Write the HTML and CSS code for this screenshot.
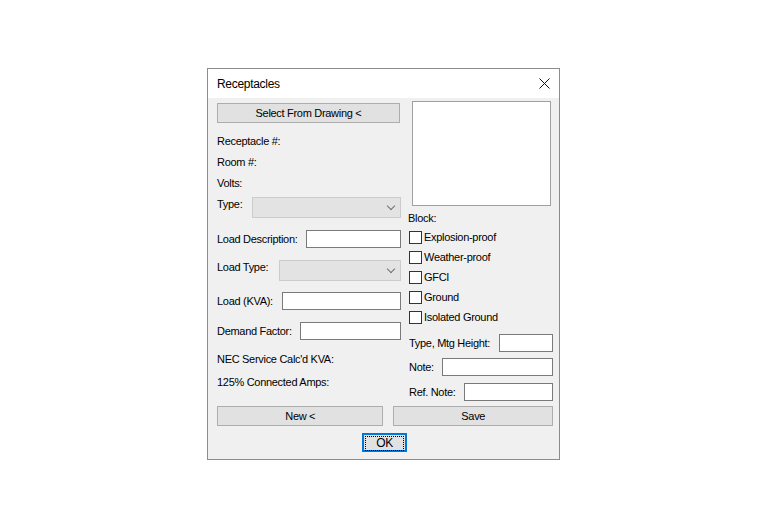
FILE: index.html
```html
<!DOCTYPE html>
<html lang="en">

<head>
    <meta charset="UTF-8">
    <title>Receptacles</title>
    <link rel="stylesheet" href="styles.css">
</head>

<body>
    <div class="dialog">
        <div class="titlebar">
            <span class="title">Receptacles</span>
            <svg class="close" width="11" height="11" viewBox="0 0 11 11">
                <path d="M0.5 0.5L10.5 10.5M10.5 0.5L0.5 10.5" />
            </svg>
        </div>
        <div class="content">
            <div class="columns">
                <div class="col-left">
                    <button class="btn btn-select">Select From Drawing &lt;</button>
                    <div class="info r-receptacle">Receptacle #:</div>
                    <div class="info r-room">Room #:</div>
                    <div class="info r-volts">Volts:</div>
                    <div class="field combo-row r-type">
                        <span class="label">Type:</span>
                        <div class="combo w-type"><span class="chev"></span></div>
                    </div>
                    <div class="field r-desc">
                        <span class="label">Load Description:</span>
                        <div class="textbox w-desc"></div>
                    </div>
                    <div class="field combo-row r-loadtype">
                        <span class="label">Load Type:</span>
                        <div class="combo w-loadtype"><span class="chev"></span></div>
                    </div>
                    <div class="field r-kva">
                        <span class="label">Load (KVA):</span>
                        <div class="textbox w-kva"></div>
                    </div>
                    <div class="field r-demand">
                        <span class="label">Demand Factor:</span>
                        <div class="textbox w-demand"></div>
                    </div>
                    <div class="info r-nec">NEC Service Calc'd KVA:</div>
                    <div class="info r-amps">125% Connected Amps:</div>
                </div>
                <div class="col-right">
                    <div class="preview"></div>
                    <div class="info r-block">Block:</div>
                    <div class="checks">
                        <label class="check"><span class="box"></span>Explosion-proof</label>
                        <label class="check"><span class="box"></span>Weather-proof</label>
                        <label class="check"><span class="box"></span>GFCI</label>
                        <label class="check"><span class="box"></span>Ground</label>
                        <label class="check"><span class="box"></span>Isolated Ground</label>
                    </div>
                    <div class="field r-mtg">
                        <span class="label">Type, Mtg Height:</span>
                        <div class="textbox w-mtg"></div>
                    </div>
                    <div class="field r-note">
                        <span class="label">Note:</span>
                        <div class="textbox w-note"></div>
                    </div>
                    <div class="field r-refnote">
                        <span class="label">Ref. Note:</span>
                        <div class="textbox w-refnote"></div>
                    </div>
                </div>
            </div>
            <div class="actions">
                <button class="btn btn-new">New &lt;</button>
                <button class="btn btn-save">Save</button>
            </div>
            <div class="ok-row">
                <button class="btn btn-ok"><span class="focus">OK</span></button>
            </div>
        </div>
    </div>
</body>

</html>
```

FILE: styles.css
```css
body {
    font-family: "Liberation Sans", Arial, sans-serif;
    font-size: 11px;
    letter-spacing: -0.3px;
    color: #000;
    margin: 0;
    padding: 0;
    background-color: #fff;
    display: flex;
    justify-content: center;
    align-items: center;
    min-height: 100vh;
}

.dialog {
    width: 351px;
    height: 390px;
    margin-right: 1px;
    border: 1px solid #8c8c8c;
    background-color: #f0f0f0;
    display: flex;
    flex-direction: column;
}

.titlebar {
    height: 29px;
    background-color: #fff;
    display: flex;
    align-items: center;
    justify-content: space-between;
    padding: 0 9px 0 9px;
}

.title {
    font-size: 12px;
}

.close path {
    stroke: #111;
    stroke-width: 1;
    fill: none;
}

.content {
    padding: 0 6px 0 9px;
}

.columns {
    height: 308px;
    display: flex;
    justify-content: space-between;
}

.col-left {
    width: 184px;
    display: flex;
    flex-direction: column;
}

.col-right {
    width: 145px;
    display: flex;
    flex-direction: column;
}

.btn {
    font-family: inherit;
    font-size: 11px;
    letter-spacing: -0.3px;
    color: #000;
    background-color: #e1e1e1;
    border: 1px solid #adadad;
    padding: 0;
    height: 20px;
}

.btn-select {
    margin-top: 5px;
    width: 183px;
}

.info {
    line-height: 16px;
}

.r-receptacle {
    margin-top: 10px;
}

.r-room,
.r-volts {
    margin-top: 5px;
}

.field {
    display: flex;
    justify-content: space-between;
    align-items: center;
}

.combo-row {
    align-items: flex-start;
}

.combo-row .label {
    line-height: 16px;
    margin-top: -1px;
}

.textbox {
    height: 16px;
    background-color: #fff;
    border: 1px solid #7a7a7a;
}

.combo {
    height: 19px;
    background-color: #e3e3e3;
    border: 1px solid #cccccc;
    position: relative;
}

.chev {
    position: absolute;
    right: 6px;
    top: 5px;
    width: 5px;
    height: 5px;
    border-right: 1px solid #707070;
    border-bottom: 1px solid #707070;
    transform: rotate(45deg);
}

.r-type {
    margin-top: 6px;
}

.w-type {
    width: 147px;
}

.r-desc {
    margin-top: 12px;
}

.w-desc {
    width: 93px;
}

.r-loadtype {
    margin-top: 12px;
}

.w-loadtype {
    width: 120px;
}

.r-kva {
    margin-top: 11px;
}

.w-kva {
    width: 117px;
}

.r-demand {
    margin-top: 12px;
}

.w-demand {
    width: 99px;
}

.r-nec {
    margin-top: 11px;
}

.r-amps {
    margin-top: 7px;
}

.preview {
    margin: 3px 0 0 4px;
    width: 137px;
    height: 103px;
    background-color: #fff;
    border: 1px solid #a0a0a0;
}

.r-block {
    margin-top: 4px;
}

.checks {
    margin-top: 1px;
    display: flex;
    flex-direction: column;
}

.check {
    height: 20px;
    display: flex;
    align-items: center;
    gap: 2px;
    padding-left: 1px;
}

.box {
    width: 11px;
    height: 11px;
    background-color: #fff;
    border: 1px solid #333;
}

.r-mtg {
    margin-top: 7px;
    padding-left: 1px;
}

.w-mtg {
    width: 52px;
}

.r-note {
    margin-top: 6px;
    padding-left: 1px;
}

.w-note {
    width: 109px;
}

.r-refnote {
    margin-top: 7px;
    padding-left: 1px;
}

.w-refnote {
    width: 87px;
}

.actions {
    display: flex;
    gap: 10px;
}

.btn-new {
    width: 167px;
}

.btn-save {
    width: 160px;
}

.ok-row {
    display: flex;
    justify-content: center;
    margin-top: 7px;
    padding-right: 1px;
}

.btn-ok {
    width: 45px;
    height: 19px;
    border: 1px solid #0078d7;
    box-shadow: inset 0 0 0 1px #0078d7;
    padding: 2px;
}

.btn-ok .focus {
    display: block;
    height: 100%;
    line-height: 13px;
    border: 1px dotted #000;
    font-size: 12px;
}
```
